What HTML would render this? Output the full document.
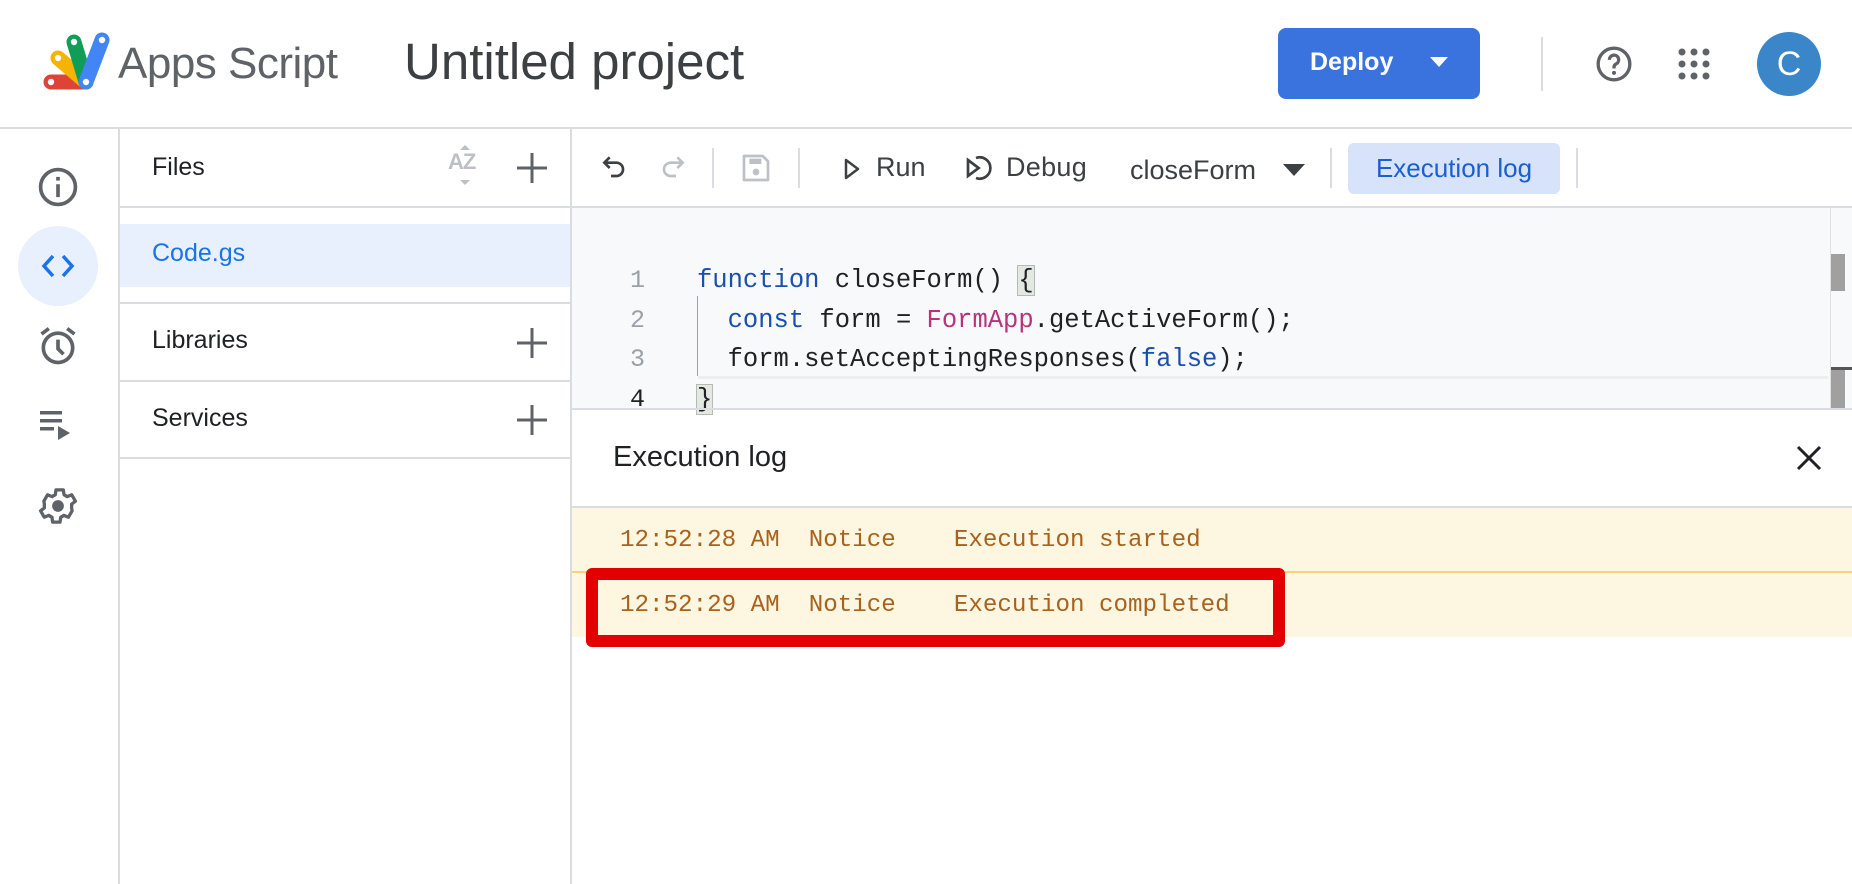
<!DOCTYPE html>
<html><head><meta charset="utf-8"><style>
*{box-sizing:border-box;margin:0;padding:0}
body{width:1852px;height:884px;background:#fff;font-family:"Liberation Sans",sans-serif;position:relative;overflow:hidden;color:#3c4043}
.a{position:absolute}
.mono{font-family:"Liberation Mono",monospace}
.hl{position:absolute;background:#dadce0}
</style></head><body>
<!-- header -->
<svg class="a" style="left:38px;top:30px" width="76" height="64" viewBox="38 30 76 64">
<g stroke-linecap="round" stroke-width="15" fill="none">
<line x1="51" y1="82" x2="86" y2="82" stroke="#db4437"/>
<line x1="58" y1="58" x2="86" y2="82" stroke="#f4b400"/>
<line x1="74" y1="42" x2="86" y2="82" stroke="#0f9d58"/>
<line x1="102" y1="40" x2="86" y2="82" stroke="#4285f4"/>
</g>
<g fill="#fff"><circle cx="51" cy="82" r="3.2"/><circle cx="58" cy="58" r="3.2"/><circle cx="74" cy="42" r="3.2"/><circle cx="102" cy="40" r="3.2"/><circle cx="86" cy="82" r="3.2"/></g>
</svg>
<div class="a" style="left:118px;top:39px;font-size:44px;color:#5f6368;letter-spacing:-0.5px">Apps Script</div>
<div class="a" style="left:404px;top:32px;font-size:51px;color:#3c4043">Untitled project</div>
<div class="a" style="left:1278px;top:28px;width:202px;height:71px;background:#3b73de;border-radius:8px;color:#fff;font-size:25px;font-weight:bold"><span class="a" style="left:32px;top:20px">Deploy</span><span class="a" style="left:152px;top:29px;border-left:9px solid transparent;border-right:9px solid transparent;border-top:10px solid #fff"></span></div>
<div class="hl" style="left:1541px;top:37px;width:2px;height:54px"></div>
<svg class="a" style="left:1594px;top:44px" width="40" height="40" viewBox="0 0 24 24"><circle cx="12" cy="12" r="9.5" fill="none" stroke="#5f6368" stroke-width="2"/><path d="M9.2 9.5a2.8 2.8 0 1 1 4 2.5c-.8.4-1.2 1-1.2 2v.7" fill="none" stroke="#5f6368" stroke-width="2"/><circle cx="12" cy="17.3" r="1.2" fill="#5f6368"/></svg>
<svg class="a" style="left:1677px;top:47px" width="34" height="34" viewBox="0 0 34 34"><g fill="#5f6368"><circle cx="5" cy="5" r="3.5"/><circle cx="17" cy="5" r="3.5"/><circle cx="29" cy="5" r="3.5"/><circle cx="5" cy="17" r="3.5"/><circle cx="17" cy="17" r="3.5"/><circle cx="29" cy="17" r="3.5"/><circle cx="5" cy="29" r="3.5"/><circle cx="17" cy="29" r="3.5"/><circle cx="29" cy="29" r="3.5"/></g></svg>
<div class="a" style="left:1757px;top:32px;width:64px;height:64px;border-radius:50%;background:#3b86c8;color:#fff;font-size:34px;text-align:center;line-height:64px">C</div>
<div class="hl" style="left:0;top:127px;width:1852px;height:2px"></div>
<!-- left rail -->
<div class="hl" style="left:118px;top:129px;width:2px;height:755px"></div>
<svg class="a" style="left:36px;top:165px" width="44" height="44" viewBox="0 0 24 24"><circle cx="12" cy="12" r="9.5" fill="none" stroke="#5f6368" stroke-width="2"/><rect x="11" y="10.5" width="2" height="7" fill="#5f6368"/><rect x="11" y="6.5" width="2" height="2" fill="#5f6368"/></svg>
<div class="a" style="left:18px;top:226px;width:80px;height:80px;border-radius:50%;background:#e8f0fe"></div>
<svg class="a" style="left:38px;top:246px" width="40" height="40" viewBox="0 0 40 40"><path d="M15 10 L6 20 L15 30 M25 10 L34 20 L25 30" fill="none" stroke="#1a73e8" stroke-width="3.5"/></svg>
<svg class="a" style="left:36px;top:324px" width="44" height="44" viewBox="0 0 24 24"><circle cx="12" cy="13" r="8" fill="none" stroke="#5f6368" stroke-width="2"/><path d="M12 8.5v5l3 3" fill="none" stroke="#5f6368" stroke-width="2"/><path d="M3 5.5 7 2.5M21 5.5 17 2.5" stroke="#5f6368" stroke-width="2"/></svg>
<svg class="a" style="left:36px;top:405px" width="44" height="44" viewBox="0 0 44 44"><g fill="#5f6368"><rect x="4" y="6" width="22" height="3.5"/><rect x="4" y="14" width="22" height="3.5"/><rect x="4" y="22" width="14" height="3.5"/><path d="M22 21 L34 28 L22 35z"/></g></svg>
<svg class="a" style="left:36px;top:484px" width="44" height="44" viewBox="0 0 24 24"><path d="M19.4 13a7.5 7.5 0 0 0 0-2l2.1-1.6-2-3.5-2.5 1a7 7 0 0 0-1.7-1l-.4-2.7h-4l-.4 2.7a7 7 0 0 0-1.7 1l-2.5-1-2 3.5L4.6 11a7.5 7.5 0 0 0 0 2l-2.1 1.6 2 3.5 2.5-1a7 7 0 0 0 1.7 1l.4 2.7h4l.4-2.7a7 7 0 0 0 1.7-1l2.5 1 2-3.5z" fill="none" stroke="#5f6368" stroke-width="1.8" stroke-linejoin="round"/><circle cx="12" cy="12" r="3.2" fill="#5f6368"/></svg>
<!-- files panel -->
<div class="hl" style="left:570px;top:129px;width:2px;height:755px"></div>
<div class="a" style="left:152px;top:153px;font-size:25px;color:#202124">Files</div>
<div class="a" style="left:448px;top:149px;font-size:22px;color:#bdc1c6;font-weight:bold;letter-spacing:-1px">AZ</div>
<div class="a" style="left:460px;top:145px;border-left:5px solid transparent;border-right:5px solid transparent;border-bottom:5px solid #bdc1c6"></div>
<div class="a" style="left:460px;top:180px;border-left:5px solid transparent;border-right:5px solid transparent;border-top:5px solid #bdc1c6"></div>
<svg class="a" style="left:515px;top:151px" width="34" height="34"><path d="M17 2v30M2 17h30" stroke="#5f6368" stroke-width="3"/></svg>
<div class="hl" style="left:120px;top:206px;width:1732px;height:2px"></div>
<div class="a" style="left:120px;top:224px;width:450px;height:63px;background:#e8f0fe"></div>
<div class="a" style="left:152px;top:239px;font-size:25px;color:#1a73e8">Code.gs</div>
<div class="hl" style="left:120px;top:302px;width:450px;height:2px"></div>
<div class="a" style="left:152px;top:326px;font-size:25px;color:#202124">Libraries</div>
<svg class="a" style="left:515px;top:326px" width="34" height="34"><path d="M17 2v30M2 17h30" stroke="#5f6368" stroke-width="3"/></svg>
<div class="hl" style="left:120px;top:380px;width:450px;height:2px"></div>
<div class="a" style="left:152px;top:404px;font-size:25px;color:#202124">Services</div>
<svg class="a" style="left:515px;top:403px" width="34" height="34"><path d="M17 2v30M2 17h30" stroke="#5f6368" stroke-width="3"/></svg>
<div class="hl" style="left:120px;top:457px;width:450px;height:2px"></div>
<!-- toolbar -->
<svg class="a" style="left:599px;top:152px" width="32" height="32" viewBox="0 0 24 24"><path d="M8 4 4 8l4 4M4 8h9a5 5 0 0 1 0 10H9" fill="none" stroke="#3c4043" stroke-width="2"/></svg>
<svg class="a" style="left:656px;top:152px" width="32" height="32" viewBox="0 0 24 24"><path d="M16 4l4 4-4 4M20 8h-9a5 5 0 0 0 0 10h4" fill="none" stroke="#bdc1c6" stroke-width="2"/></svg>
<div class="hl" style="left:712px;top:148px;width:2px;height:40px"></div>
<svg class="a" style="left:740px;top:152px" width="32" height="32" viewBox="0 0 24 24"><path d="M3 3h14l4 4v14H3z" fill="none" stroke="#bdc1c6" stroke-width="2" stroke-linejoin="round"/><rect x="7" y="5" width="9" height="4" fill="#bdc1c6"/><circle cx="12" cy="15" r="2.5" fill="#bdc1c6"/></svg>
<div class="hl" style="left:798px;top:148px;width:2px;height:40px"></div>
<svg class="a" style="left:843px;top:157px" width="18" height="24"><path d="M3 3 L15 12 L3 21z" fill="none" stroke="#3c4043" stroke-width="2.5" stroke-linejoin="round"/></svg>
<div class="a" style="left:876px;top:152px;font-size:27px;color:#3c4043">Run</div>
<svg class="a" style="left:964px;top:152px" width="32" height="32" viewBox="0 0 24 24"><path d="M3 6 L11 12 L3 18z" fill="none" stroke="#3c4043" stroke-width="2"/><path d="M9 4.5A8 8 0 1 1 9 19.5" fill="none" stroke="#3c4043" stroke-width="2"/></svg>
<div class="a" style="left:1006px;top:152px;font-size:27px;color:#3c4043;letter-spacing:0.3px">Debug</div>
<div class="a" style="left:1130px;top:155px;font-size:27px;color:#3c4043">closeForm</div>
<div class="a" style="left:1283px;top:164px;border-left:11px solid transparent;border-right:11px solid transparent;border-top:12px solid #3c4043"></div>
<div class="hl" style="left:1330px;top:148px;width:2px;height:40px"></div>
<div class="a" style="left:1348px;top:143px;width:212px;height:51px;background:#d7e3fb;border-radius:6px;color:#1a5fd0;font-size:26px;line-height:51px;text-align:center">Execution log</div>
<div class="hl" style="left:1576px;top:148px;width:2px;height:40px"></div>
<!-- editor -->
<div class="a" style="left:572px;top:208px;width:1280px;height:200px;background:#f8f9fa"></div>
<div class="a" style="left:698px;top:376px;width:1130px;height:3px;background:#eceef0"></div>
<div class="a" style="left:697px;top:296px;width:1px;height:80px;background:#9aa0a6"></div>
<div class="a mono" style="left:630px;top:261px;font-size:25px;line-height:39.5px;color:#9aa0a6">1<br>2<br>3<br><span style="color:#202124">4</span></div>
<div class="a mono" style="left:697px;top:261px;font-size:25.5px;line-height:39.5px;color:#202124;white-space:pre"><span style="color:#1a4fb0">function</span> closeForm() <span style="background:#e4e8e2;outline:1px solid #b5bab3">{</span>
  <span style="color:#1a4fb0">const</span> form = <span style="color:#b8327c">FormApp</span>.getActiveForm();
  form.setAcceptingResponses(<span style="color:#1a4fb0">false</span>);
<span style="background:#e4e8e2;outline:1px solid #b5bab3">}</span></div>
<div class="a" style="left:1830px;top:208px;width:1px;height:200px;background:#e0e0e0"></div>
<div class="a" style="left:1831px;top:254px;width:14px;height:37px;background:#a0a0a0"></div>
<div class="a" style="left:1831px;top:367px;width:21px;height:3px;background:#555"></div>
<div class="a" style="left:1831px;top:370px;width:14px;height:38px;background:#a0a0a0"></div>
<div class="hl" style="left:572px;top:408px;width:1280px;height:2px"></div>
<!-- exec log -->
<div class="a" style="left:613px;top:441px;font-size:29px;color:#202124">Execution log</div>
<svg class="a" style="left:1795px;top:444px" width="28" height="28"><path d="M3 3L25 25M25 3L3 25" stroke="#202124" stroke-width="3"/></svg>
<div class="hl" style="left:572px;top:506px;width:1280px;height:2px"></div>
<div class="a" style="left:572px;top:508px;width:1280px;height:129px;background:#fdf6e1"></div>
<div class="a" style="left:572px;top:571px;width:1280px;height:2px;background:#f6d27a"></div>
<div class="a mono" style="left:620px;top:527px;font-size:24.2px;color:#a8621d;white-space:pre">12:52:28 AM  Notice    Execution started</div>
<div class="a mono" style="left:620px;top:592px;font-size:24.2px;color:#a8621d;white-space:pre">12:52:29 AM  Notice    Execution completed</div>
<div class="a" style="left:586px;top:568px;width:699px;height:79px;border:12px solid #e20000;border-radius:6px"></div>
</body></html>
